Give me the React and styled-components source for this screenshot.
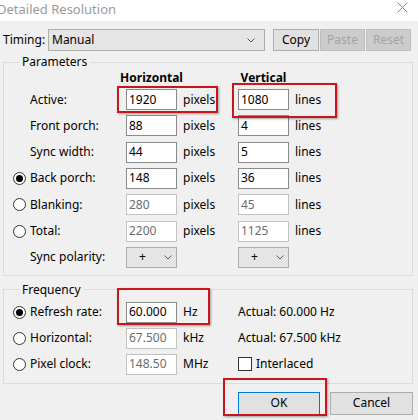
import React from "react";
import styled, { createGlobalStyle, css } from "styled-components";

const GlobalStyle = createGlobalStyle`
  html, body {
    margin: 0;
    padding: 0;
    background: #f0f0f0;
  }
  body {
    font-family: "Noto Sans", "Open Sans", sans-serif;
    font-size: 12px;
    color: #000;
  }
`;

const Window = styled.div`
  position: relative;
  width: 418px;
  height: 420px;
  overflow: hidden;
  background: #f0f0f0;
`;

const TitleBar = styled.div`
  height: 21px;
  background: #fff;
  display: flex;
  align-items: center;
  justify-content: space-between;
  padding: 0 10px 0 0;
`;

const Title = styled.span`
  margin-left: -3px;
  font-size: 13px;
  color: #9a9a9a;
  line-height: 16px;
  margin-top: -3px;
`;

const CloseGlyph = styled.svg`
  width: 11px;
  height: 11px;
  margin-top: -6px;
`;

const Body = styled.div`
  padding: 8px 5px 0 3px;
  display: flex;
  flex-direction: column;
`;

const TimingRow = styled.div`
  display: flex;
  align-items: center;
  height: 22px;
`;

const FieldLabel = styled.span`
  width: 45px;
  line-height: 16px;
  white-space: nowrap;
`;

const Combo = styled.div`
  box-sizing: border-box;
  display: flex;
  align-items: center;
  justify-content: space-between;
  width: ${(p) => p.$width}px;
  height: ${(p) => p.$height}px;
  padding: ${(p) => p.$pad};
  background: #e5e5e5;
  border: 1px solid #adadad;
  line-height: 16px;
`;

const Chevron = styled.svg`
  width: 8px;
  height: 5px;
  flex: none;
`;

const TopButtons = styled.div`
  display: flex;
  gap: 1px;
  margin-left: 8px;
`;

const PushButton = styled.button`
  box-sizing: border-box;
  width: ${(p) => p.$width}px;
  height: ${(p) => p.$height}px;
  padding: 0;
  font: inherit;
  line-height: 16px;
  color: #000;
  background: #e1e1e1;
  border: 1px solid #adadad;
  ${(p) =>
    p.$default &&
    css`
      border-color: #0078d7;
    `}
  &:disabled {
    color: #a3a3a3;
    background: #cccccc;
    border-color: #bfbfbf;
  }
`;

const Group = styled.fieldset`
  margin: ${(p) => p.$top}px 0 0 0;
  padding: ${(p) => p.$padTop}px 0 ${(p) => p.$padBottom}px 9px;
  border: 1px solid #dcdcdc;
  display: flex;
  flex-direction: column;
  gap: ${(p) => p.$gap}px;
  min-width: 0;
`;

const Legend = styled.legend`
  margin-left: 6px;
  padding: 0 3px;
  line-height: 16px;
`;

const Row = styled.div`
  display: grid;
  grid-template-columns: 17px 96px 51px 61px 51px 1fr;
  align-items: center;
  height: ${(p) => p.$height || 21}px;
  white-space: nowrap;
`;

const Heading = styled.span`
  grid-column: ${(p) => p.$col};
  display: flex;
  justify-content: center;
  font-weight: 700;
  line-height: 16px;
`;

const Radio = styled.span`
  box-sizing: border-box;
  width: 13px;
  height: 13px;
  border-radius: 50%;
  border: 1px solid #333;
  background: #fff;
  display: flex;
  align-items: center;
  justify-content: center;
  &::after {
    content: "";
    width: 7px;
    height: 7px;
    border-radius: 50%;
    background: ${(p) => (p.$on ? "#000" : "transparent")};
  }
`;

const Text = styled.span`
  grid-column: ${(p) => p.$col || "auto"};
  line-height: 16px;
`;

const Unit = styled.span`
  padding-left: 6px;
  line-height: 16px;
`;

const Field = styled.div`
  box-sizing: border-box;
  grid-column: ${(p) => p.$col || "auto"};
  height: 21px;
  padding: 0 2px;
  display: flex;
  align-items: center;
  background: #fff;
  border: 1px solid ${(p) => (p.$off ? "#c2c2c2" : "#8a8a8a")};
  color: ${(p) => (p.$off ? "#6d6d6d" : "#000")};
  line-height: 16px;
`;

const CheckLine = styled.span`
  grid-column: 5 / span 2;
  display: flex;
  align-items: center;
  gap: 4px;
  line-height: 16px;
`;

const CheckBox = styled.span`
  box-sizing: border-box;
  width: 14px;
  height: 14px;
  border: 1px solid #333;
  background: #fff;
`;

const Footer = styled.div`
  display: flex;
  justify-content: flex-end;
  gap: 10px;
  margin-top: 8px;
`;

const Mark = styled.div`
  position: absolute;
  box-sizing: border-box;
  left: ${(p) => p.$x}px;
  top: ${(p) => p.$y}px;
  width: ${(p) => p.$w}px;
  height: ${(p) => p.$h}px;
  border: 2px solid #c8161d;
  box-shadow: 1px 1px 2px rgba(0, 0, 0, 0.35);
  pointer-events: none;
`;

const ChevronIcon = () => (
  <Chevron viewBox="0 0 8 5">
    <polyline points="0.5,0.5 4,4 7.5,0.5" fill="none" stroke="#555" strokeWidth="1" />
  </Chevron>
);

const timingRows = [
  { label: "Active:", h: "1920", v: "1080" },
  { label: "Front porch:", h: "88", v: "4" },
  { label: "Sync width:", h: "44", v: "5" },
  { label: "Back porch:", h: "148", v: "36", radio: true, on: true },
  { label: "Blanking:", h: "280", v: "45", radio: true, off: true },
  { label: "Total:", h: "2200", v: "1125", radio: true, off: true },
];

const freqRows = [
  { label: "Refresh rate:", value: "60.000", unit: "Hz", on: true, actual: "Actual: 60.000 Hz" },
  { label: "Horizontal:", value: "67.500", unit: "kHz", off: true, actual: "Actual: 67.500 kHz" },
  { label: "Pixel clock:", value: "148.50", unit: "MHz", off: true, check: "Interlaced" },
];

const Polarity = ({ col }) => (
  <Combo $width={51} $height={21} $pad="0 4px 0 12px" style={{ gridColumn: col }}>
    <span>+</span>
    <ChevronIcon />
  </Combo>
);

export default function App() {
  return (
    <>
      <GlobalStyle />
      <Window>
        <TitleBar>
          <Title>Detailed Resolution</Title>
          <CloseGlyph viewBox="0 0 11 11">
            <path d="M0.5 0.5 L10.5 10.5 M10.5 0.5 L0.5 10.5" stroke="#8a8a8a" strokeWidth="1" fill="none" />
          </CloseGlyph>
        </TitleBar>
        <Body>
          <TimingRow>
            <FieldLabel>Timing:</FieldLabel>
            <Combo $width={217} $height={22} $pad="0 9px 0 3px">
              <span>Manual</span>
              <ChevronIcon />
            </Combo>
            <TopButtons>
              <PushButton $width={46} $height={22}>Copy</PushButton>
              <PushButton $width={45} $height={22} disabled>Paste</PushButton>
              <PushButton $width={45} $height={22} disabled>Reset</PushButton>
            </TopButtons>
          </TimingRow>

          <Group $top={3} $padTop={0} $padBottom={7} $gap={5.33}>
            <Legend>Parameters</Legend>
            <Row $height={16}>
              <Heading $col={3}>Horizontal</Heading>
              <Heading $col={5}>Vertical</Heading>
            </Row>
            {timingRows.map((r, i) => (
              <Row key={r.label} style={i === 0 ? { marginTop: -2.33 } : undefined}>
                {r.radio ? <Radio $on={r.on} /> : <span />}
                <Text>{r.label}</Text>
                <Field $off={r.off}>{r.h}</Field>
                <Unit>pixels</Unit>
                <Field $off={r.off}>{r.v}</Field>
                <Unit>lines</Unit>
              </Row>
            ))}
            <Row>
              <Text $col={2}>Sync polarity:</Text>
              <Polarity col={3} />
              <Polarity col={5} />
            </Row>
          </Group>

          <Group $top={6} $padTop={4} $padBottom={8} $gap={5}>
            <Legend>Frequency</Legend>
            {freqRows.map((r) => (
              <Row key={r.label}>
                <Radio $on={r.on} />
                <Text>{r.label}</Text>
                <Field $off={r.off}>{r.value}</Field>
                <Unit>{r.unit}</Unit>
                {r.actual ? (
                  <Text $col="5 / span 2">{r.actual}</Text>
                ) : (
                  <CheckLine>
                    <CheckBox />
                    {r.check}
                  </CheckLine>
                )}
              </Row>
            ))}
          </Group>

          <Footer>
            <PushButton $width={82} $height={23} $default>OK</PushButton>
            <PushButton $width={83} $height={23}>Cancel</PushButton>
          </Footer>
        </Body>

        <Mark $x={117} $y={86} $w={101} $h={27} />
        <Mark $x={232} $y={83} $w={105} $h={35} />
        <Mark $x={117} $y={288} $w={93} $h={37} />
        <Mark $x={223} $y={378} $w={104} $h={38} />
      </Window>
    </>
  );
}
